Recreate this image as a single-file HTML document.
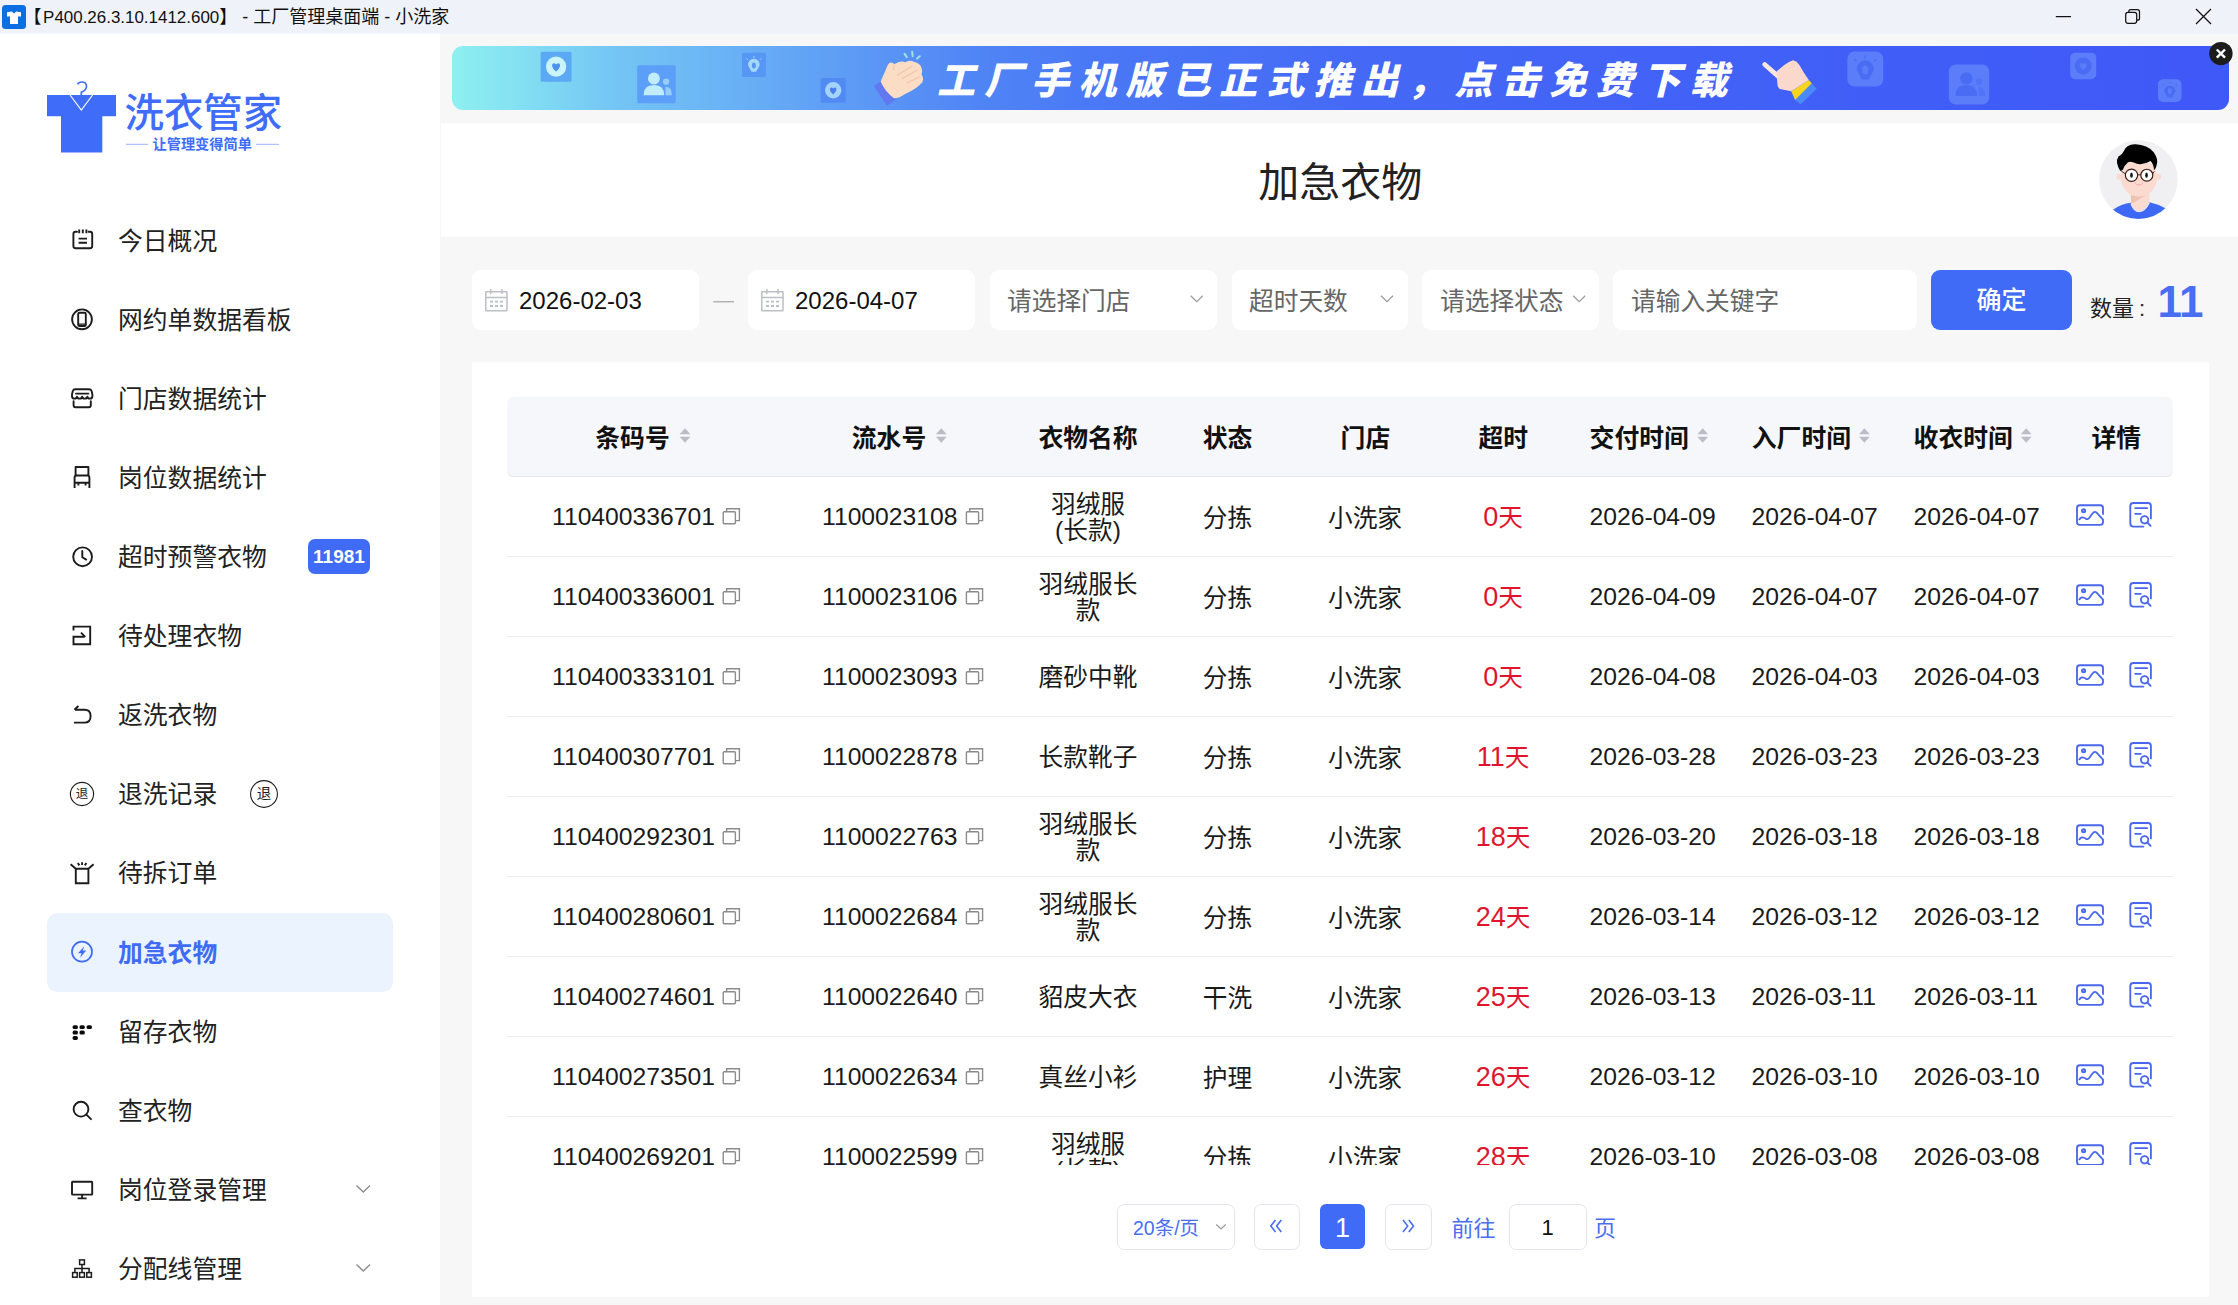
<!DOCTYPE html>
<html lang="zh-CN">
<head>
<meta charset="utf-8">
<title>工厂管理桌面端 - 小洗家</title>
<style>
*{box-sizing:border-box;margin:0;padding:0}
html,body{width:2238px;height:1305px;overflow:hidden;background:#f7f7f8}
body{font-family:"Liberation Sans","Noto Sans CJK SC",sans-serif;color:#1d1d1f;position:relative}
.abs{position:absolute}
svg{position:absolute;overflow:visible}
#titlebar{left:0;top:0;width:2238px;height:33px;background:#eff3f9}
#titlebar span{position:absolute;top:1px;height:33px;line-height:33px;font-size:18px;color:#111;white-space:nowrap}
#sidebar{left:0;top:33px;width:440px;height:1272px;background:#fff}
.mt{position:absolute;left:118px;height:40px;line-height:40px;font-size:24.8px;color:#222;white-space:nowrap}
#act{left:47px;top:912.6px;width:345.6px;height:79px;border-radius:10.5px;background:#ebf3fe}
.mt.on{color:#3f6bf6;font-weight:700}
.badge{left:308px;top:539px;width:62px;height:35px;border-radius:7px;background:#3f6bf6;color:#fff;font-size:19px;font-weight:700;line-height:35px;text-align:center}
#mainhead{left:441px;top:123px;width:1797px;height:114px;background:#fff}
#title{left:441.7px;top:122.5px;width:1797px;height:114px;line-height:121px;text-align:center;font-size:41px;color:#222}
#banner{left:452px;top:46px;width:1777px;height:63.5px;border-radius:11px;overflow:hidden;background:linear-gradient(90deg,#8ef0f0 0%,#84e2f2 3.4%,#74c6f4 9%,#69b1f5 15.8%,#60a2f5 20.4%,#5993f5 24.9%,#5085f5 29.4%,#4a78f6 36.2%,#4770f6 45.2%,#4569f6 50.6%,#4160f7 75%,#3f58f8 100%)}
#btext{left:937px;top:49px;height:63px;line-height:64px;color:#fff;font-weight:900;font-style:italic;font-size:38px;letter-spacing:9.05px;white-space:nowrap}
.inp{position:absolute;top:270px;height:59.5px;background:#fff;border-radius:9px}
.it{position:absolute;top:270px;height:59px;line-height:63px;font-size:24.7px;color:#111;white-space:nowrap}
.it.ph{color:#666}
#card{left:472px;top:361.5px;width:1737px;height:935.5px;background:#fff}
#thead{left:507px;top:397px;width:1666px;height:79px;background:#f6f7fa;border-radius:6px;box-shadow:0 1px 0 #e6e7ec}
.th{position:absolute;top:397px;height:79px;line-height:83px;font-size:24.8px;font-weight:700;color:#111;white-space:nowrap}
#tbody{left:507px;top:477px;width:1666px;height:688px;overflow:hidden}
.tr{position:absolute;left:0;width:1666px;height:80px;border-bottom:1px solid #ebecf0}
.td{position:absolute;top:0;height:79px;display:flex;align-items:center;justify-content:center;text-align:center;font-size:24.7px;line-height:26px;color:#1a1a1a;white-space:nowrap}
.td.l{justify-content:flex-start}
.td.w{white-space:normal;padding-top:2px}
.td.red{color:#e0142d}
.td.c{padding-top:4px}
.td.red{padding-top:2.4px}
.td.red b{font-weight:400;font-size:27px;position:relative;top:-0.8px}
.pg{position:absolute;top:1203.5px;height:46px;line-height:46px;white-space:nowrap}
.pb{border:1px solid #e4e6ec;border-radius:7px;background:#fff}
</style>
</head>
<body>
<div id="titlebar" class="abs"><svg style="left:2px;top:5px" width="24" height="24" viewBox="0 0 24 24"><rect width="24" height="24" rx="3.5" fill="#0b6fe3"/><path d="M5 7.2 L9.8 6.5 L12 8.6 L14.2 6.5 L19 7.2 L19 11.4 L16 11.4 L16 19 L8 19 L8 11.4 L5 11.4Z" fill="#fff"/></svg><span style="left:23.5px">【<i style="font-style:normal;font-size:16.95px;margin-left:1.6px">P400.26.3.10.1412.600</i>】 - 工厂管理桌面端 - 小洗家</span><svg style="left:2040px;top:0" width="198" height="33" viewBox="2040 0 198 33" fill="none" stroke="#111" stroke-width="1.25"><path d="M2055.8 16.6H2071"/><rect x="2125.7" y="12.3" width="11" height="11" rx="2.2"/><path d="M2128.8 12.3V11.5Q2128.8 9.5 2130.8 9.5H2137.3Q2139.5 9.5 2139.5 11.7V18.2Q2139.5 20.2 2137.5 20.2H2136.7"/><path d="M2196 9L2211 24M2211 9L2196 24"/></svg></div>
<div id="sidebar" class="abs"></div>
<div class="abs" style="left:0;top:33px;width:2238px;height:1px;background:rgba(239,243,249,.55)"></div>
<div id="act" class="abs"></div>
<svg style="left:0;top:33px" width="440" height="160" viewBox="0 33 440 160"><path d="M47 95H116V116.3H102.3V152.5H61V116.3H47Z" fill="#406cfa"/><path d="M70 95L81.3 110L92.6 95" fill="none" stroke="#fff" stroke-width="1.2"/><path d="M81.3 95V92.2Q86.5 90.5 86.5 86.3Q86.5 82 81.8 82Q78.6 82 77.6 84.3" fill="none" stroke="#406cfa" stroke-width="1.7"/><path d="M126 144.3H148M256 144.3H279" stroke="#9fb3f6" stroke-width="1"/></svg><div class="abs" style="left:124.5px;top:87.5px;height:50px;line-height:50px;font-size:39.4px;color:#406cfa;font-weight:500;white-space:nowrap">洗衣管家</div><div class="abs" style="left:152.5px;top:134px;height:20px;line-height:20px;font-size:14.2px;color:#406cfa;font-weight:700;white-space:nowrap">让管理变得简单</div>
<div class="mt" style="top:222px">今日概况</div><div class="mt" style="top:301px">网约单数据看板</div><div class="mt" style="top:380px">门店数据统计</div><div class="mt" style="top:459px">岗位数据统计</div><div class="mt" style="top:538px">超时预警衣物</div><div class="mt" style="top:617px">待处理衣物</div><div class="mt" style="top:696px">返洗衣物</div><div class="mt" style="top:775px">退洗记录</div><div class="mt" style="top:854px">待拆订单</div><div class="mt on" style="top:934px">加急衣物</div><div class="mt" style="top:1013px">留存衣物</div><div class="mt" style="top:1092px">查衣物</div><div class="mt" style="top:1171px">岗位登录管理</div><div class="mt" style="top:1250px">分配线管理</div>
<div class="badge abs">11981</div>
<svg style="left:0;top:0" width="440" height="1305" viewBox="0 0 440 1305"><g stroke="#1c1c1c" stroke-width="1.9" fill="none" stroke-linecap="round" stroke-linejoin="round"><path d="M77 231.8H75.6Q73.4 231.8 73.4 234V246Q73.4 248.2 75.6 248.2H90Q92.2 248.2 92.2 246V234Q92.2 231.8 90 231.8H88.6"/><path d="M79.2 229.4V233.2M82.8 229.4V233.2M86.4 229.4V233.2M78.6 238.6H87M78.6 242.8H87" stroke-linecap="butt"/><circle cx="82" cy="319.3" r="9.9"/><rect x="78.2" y="312.8" width="7.6" height="13.2" rx="1.3"/><path d="M78.2 324.2H85.8" stroke-width="1.2"/><path d="M75.3 389.3H89Q91 389.3 91.6 391L92.4 394.5V396.2Q92.4 398.6 89.9 398.6Q87.6 398.6 87.4 396.6Q87.2 398.6 84.8 398.6Q82.4 398.6 82.2 396.6Q82 398.6 79.6 398.6Q77.2 398.6 77 396.6Q76.8 398.6 74.5 398.6Q72 398.6 72 396.2V394.5L72.8 391Q73.4 389.3 75.3 389.3Z"/><path d="M76 393.6H88.4M73.6 401.2V405.2Q73.6 407.2 75.6 407.2H88.8Q90.8 407.2 90.8 405.2V401.2"/><path d="M75.6 475.5V467H88.4V475.5M74.6 488V477.5Q74.6 475.5 76.6 475.5H87.4Q89.4 475.5 89.4 477.5V488M74.6 482.8H89.4M78.4 482.8V485.6M85.6 482.8V485.6" stroke-linecap="butt"/><circle cx="82.6" cy="556.8" r="9.4"/><path d="M82.3 551V557.3L86.2 559.6"/><path d="M73.5 630.5V626.6H90.2V644.2H73.5V636.8H84.8M81 632.6L85.2 636.8" stroke-linecap="butt" stroke-linejoin="miter"/><path d="M74 722.6H84.5Q90.6 722.6 90.6 716.2Q90.6 709.8 84.5 709.8H75M78.4 706L74.4 709.8" stroke-linejoin="miter" stroke-linecap="butt"/><path d="M75.8 868.8H88.4V883.2H75.8ZM75.8 868.8L70.6 864.2M88.4 868.8L93.6 864.2M79.4 865.4L77.8 863M82.1 865V862.2M84.8 865.4L86.4 863" stroke-linecap="butt" stroke-linejoin="miter"/><circle cx="81" cy="1109.2" r="7.4"/><path d="M86.4 1114.6L91 1119.2"/><rect x="72" y="1181.8" width="20.2" height="12.8" rx="0.6"/><path d="M82.1 1194.6V1198.4M77.6 1198.4H86.6" stroke-linecap="butt"/><g stroke-width="1.5" stroke-linecap="butt" stroke-linejoin="miter"><rect x="79.6" y="1259.9" width="4.8" height="4.6"/><rect x="72.6" y="1272.6" width="4.6" height="4.6"/><rect x="79.6" y="1272.6" width="4.8" height="4.6"/><rect x="86.8" y="1272.6" width="4.6" height="4.6"/><path d="M82 1264.5V1272.6M74.9 1272.6V1268.4H89.1V1272.6"/></g></g><circle cx="82" cy="794" r="11.6" fill="none" stroke="#1c1c1c" stroke-width="1.1"/><circle cx="264" cy="794" r="13.4" fill="none" stroke="#1c1c1c" stroke-width="1.1"/><circle cx="82" cy="951.7" r="10" fill="none" stroke="#3f6bf6" stroke-width="1.7"/><path d="M84.3 946.2L78 953.2H81.5L80 957.8L86.2 950.5H82.7Z" fill="#3f6bf6"/><rect x="72.6" y="1025.2" width="5.3" height="3.9" rx="1.6" fill="#0a0a0a"/><rect x="79.5" y="1025.2" width="5.3" height="3.9" rx="1.6" fill="#0a0a0a"/><rect x="86.6" y="1025.2" width="5.3" height="3.9" rx="1.6" fill="#0a0a0a"/><rect x="72.6" y="1030.6" width="5.3" height="3.9" rx="1.6" fill="#0a0a0a"/><rect x="79.5" y="1030.6" width="5.3" height="3.9" rx="1.6" fill="#0a0a0a"/><rect x="72.6" y="1036.0" width="5.3" height="3.9" rx="1.6" fill="#0a0a0a"/><path d="M356.5 1185.5L363.3 1192L370 1185.5M356.5 1264.5L363.3 1271L370 1264.5" fill="none" stroke="#8a8a8a" stroke-width="1.3"/></svg>
<div class="abs" style="left:72px;top:784px;width:20px;height:20px;line-height:20px;text-align:center;font-size:12.5px;color:#1c1c1c">退</div><div class="abs" style="left:253px;top:783px;width:22px;height:22px;line-height:22px;text-align:center;font-size:14.5px;color:#1c1c1c">退</div>
<div id="banner" class="abs"></div>
<svg style="left:0;top:40px" width="2238" height="80" viewBox="0 40 2238 80"><rect x="540.7" y="51.7" width="30.8" height="30.0" rx="1.5" fill="#5ba9f5"/><circle cx="556.1" cy="66.7" r="10.1" fill="#c9f4fb"/><path d="M556.1 71.6C549.2 66.2 552.7 61.0 556.1 64.5C559.5 61.0 563.0 66.2 556.1 71.6Z" fill="#4d92ea"/><rect x="637.2" y="65.3" width="38.6" height="37.9" rx="2.0" fill="#5c9ff8"/><circle cx="653.9" cy="78.5" r="5.9" fill="#c0ecfb"/><path d="M643.6 95.2q0 -10.3 10.3 -10.3q10.3 0 10.3 10.3z" fill="#c0ecfb"/><circle cx="666.1" cy="81.7" r="3.1" fill="#c0ecfb" opacity=".6"/><path d="M665.5 86.8q6.4 0.0 6.4 8.4h-6.4z" fill="#c0ecfb" opacity=".6"/><rect x="742.0" y="52.8" width="23.8" height="24.1" rx="1.5" fill="#5696f4"/><path d="M748.1 65.4a5.8 5.8 0 1 1 11.5 0l-3.5 6.3h-4.6z" fill="#a6d8fa"/><ellipse cx="753.9" cy="65.5" rx="2.0" ry="3.0" fill="#5696f4"/><path d="M753.9 57.7v-1.8M747.9 59.8l-1.4 -1.4M759.9 59.8l1.4 -1.4" stroke="#a6d8fa" stroke-width="1.0" fill="none"/><rect x="820.6" y="78.0" width="25.1" height="24.7" rx="1.5" fill="#528af3"/><circle cx="833.2" cy="90.3" r="8.2" fill="#a3d2fa"/><path d="M833.2 94.4C827.5 89.9 830.3 85.7 833.2 88.5C836.0 85.7 838.8 89.9 833.2 94.4Z" fill="#4a7eea"/><rect x="1847.4" y="51.6" width="35.8" height="34.9" rx="7.0" fill="#5c7df9"/><path d="M1856.6 69.9a8.7 8.7 0 1 1 17.3 0l-5.2 9.5h-6.9z" fill="#4a6cf5"/><ellipse cx="1865.3" cy="70.1" rx="2.9" ry="4.5" fill="#5c7df9"/><path d="M1865.3 58.3v-2.8M1856.3 61.4l-2.1 -2.1M1874.3 61.4l2.1 -2.1" stroke="#4a6cf5" stroke-width="1.6" fill="none"/><rect x="1948.8" y="64.4" width="40.4" height="40.1" rx="7.0" fill="#5c7df9"/><circle cx="1966.3" cy="78.4" r="6.2" fill="#4a6cf5"/><path d="M1955.5 95.9q0 -10.8 10.8 -10.8q10.8 0 10.8 10.8z" fill="#4a6cf5"/><circle cx="1979.1" cy="81.8" r="3.2" fill="#4a6cf5" opacity=".6"/><path d="M1978.4 87.1q6.7 0.0 6.7 8.8h-6.7z" fill="#4a6cf5" opacity=".6"/><rect x="2070.2" y="52.8" width="26.0" height="26.5" rx="5.0" fill="#5c7df9"/><circle cx="2083.2" cy="66.0" r="8.5" fill="#4a6cf5"/><path d="M2083.2 70.2C2077.4 65.6 2080.3 61.3 2083.2 64.2C2086.1 61.3 2089.0 65.6 2083.2 70.2Z" fill="#5c7df9"/><rect x="2158.0" y="79.3" width="23.5" height="22.7" rx="5.0" fill="#5c7df9"/><path d="M2164.1 91.2a5.7 5.7 0 1 1 11.4 0l-3.4 6.2h-4.5z" fill="#4a6cf5"/><ellipse cx="2169.8" cy="91.3" rx="1.9" ry="3.0" fill="#5c7df9"/><path d="M2169.8 83.6v-1.8M2163.8 85.7l-1.4 -1.4M2175.7 85.7l1.4 -1.4" stroke="#4a6cf5" stroke-width="1.0" fill="none"/><g transform="translate(865,44) scale(0.05211)"><path d="M170 800L330 700L600 1060L420 1190Z" fill="#6272f0" fill-opacity=".8"/><path d="M300 720L440 400Q490 320 560 385L590 375Q690 310 770 350Q850 295 940 340Q1060 375 1080 445Q1115 520 1085 585Q1135 660 1100 735Q1000 860 770 960Q650 1045 555 1040Q380 910 300 720Z" fill="#fbdcc4"/><path d="M560 400L545 500M620 600L900 425M715 665L1000 505M810 745L1050 625" stroke="#f3c9ae" stroke-width="24" fill="none" stroke-linecap="round"/><path d="M800 250L760 190M915 235L905 150M1000 280L1050 235" stroke="#a5dfe0" stroke-width="40" stroke-linecap="round"/></g><g transform="translate(1750,48) scale(0.04904)"><path d="M920 1060L1260 720L1360 830L1030 1150Z" fill="#4a8af8"/><path d="M840 880L1200 650L1260 720L920 1060Z" fill="#f7d41e"/><path d="M300 335L600 600" stroke="#fbe7e2" stroke-width="95" stroke-linecap="round"/><path d="M540 480L700 345Q800 270 880 250Q960 270 1000 335L1110 520L1200 650L840 880L610 835Q555 800 560 740Z" fill="#fbd8cc"/></g></svg>
<div id="btext" class="abs">工厂手机版已正式推出，点击免费下载</div>
<svg style="left:2205px;top:38px" width="32" height="32" viewBox="2205 38 32 32"><circle cx="2220.9" cy="53.6" r="11.7" fill="#1c1c1c"/><path d="M2216.8 49.5L2225 57.7M2225 49.5L2216.8 57.7" stroke="#fff" stroke-width="2.4"/></svg>
<div id="mainhead" class="abs"></div><div id="title" class="abs">加急衣物</div>
<svg style="left:2080px;top:130px" width="120" height="100" viewBox="0 0 1566 1305"><defs><clipPath id="avc"><circle cx="762" cy="647" r="513"/></clipPath></defs><circle cx="762" cy="647" r="513" fill="#f0f0f2"/><g clip-path="url(#avc)"><path d="M430 1040Q540 960 665 948L905 942Q1020 965 1120 1025L1120 1250L430 1250Z" fill="#3d68f5"/><path d="M665 780V965Q700 1065 775 1065Q850 1060 905 950V780Z" fill="#fbdad0"/><path d="M665 830V965L860 850Z" fill="#ecc2b1"/><path d="M665 960Q700 1065 775 1065Q850 1060 905 950" fill="none" stroke="#e6e2fb" stroke-width="16"/><circle cx="512" cy="610" r="38" fill="#fbdad0"/><circle cx="1022" cy="610" r="38" fill="#fbdad0"/><ellipse cx="770" cy="625" rx="235" ry="245" fill="#fbdad0"/><path d="M525 535Q455 420 500 350Q560 310 575 270Q610 180 725 185Q880 190 962 290Q1030 390 1000 460Q990 505 968 525Q962 450 920 405Q800 475 700 425Q650 405 625 425Q580 460 560 520Z" fill="#000"/><circle cx="672" cy="590" r="80" fill="#fff" stroke="#3a1c14" stroke-width="15"/><circle cx="872" cy="590" r="78" fill="#fff" stroke="#3a1c14" stroke-width="15"/><ellipse cx="672" cy="590" rx="17" ry="34" fill="#111"/><ellipse cx="868" cy="590" rx="17" ry="34" fill="#111"/><path d="M752 585H794M594 575L535 532M950 570L968 540" stroke="#3a1c14" stroke-width="12"/><path d="M722 700Q775 745 822 690" fill="none" stroke="#f0a3a3" stroke-width="12" stroke-linecap="round"/></g></svg>
<div class="inp" style="left:472px;width:227px"></div><div class="inp" style="left:748px;width:227px"></div><div class="inp" style="left:990px;width:227px"></div><div class="inp" style="left:1232px;width:176px"></div><div class="inp" style="left:1422px;width:177px"></div><div class="inp" style="left:1613px;width:304px"></div>
<div class="it" style="left:519px;font-size:24px;line-height:62px">2026-02-03</div><div class="it" style="left:795px;font-size:24px;line-height:62px">2026-04-07</div><div class="it ph" style="left:1007px">请选择门店</div><div class="it ph" style="left:1249px">超时天数</div><div class="it ph" style="left:1440px">请选择状态</div><div class="it ph" style="left:1631px">请输入关键字</div>
<div class="abs" style="left:1931px;top:270px;width:141px;height:59.5px;border-radius:9px;background:#3f6bf6;color:#fff;text-align:center;line-height:60px;font-size:25px;font-weight:500">确定</div><div class="abs" style="left:2090px;top:291px;height:34px;line-height:35px;font-size:22px;color:#222;white-space:nowrap">数量<span style="margin-left:5px">:</span></div><div class="abs" style="left:2157.5px;top:276.5px;height:50px;line-height:50px;font-size:44px;letter-spacing:-0.6px;font-weight:700;color:#4a6ef2;white-space:nowrap">11</div>
<svg style="left:470px;top:265px" width="1500" height="70" viewBox="470 265 1500 70"><g transform="translate(485.0,289)" fill="none" stroke="#bdbfc4" stroke-width="1.5"><rect x="0.8" y="2.8" width="21.2" height="19" rx="0.5"/><path d="M0.8 8.4H22M5.8 0V5M17 0V5"/><path d="M5 12.6H8M10 12.6H13M15 12.6H18M5 17H8M10 17H13M15 17H18" stroke-width="1.8"/></g><g transform="translate(761.0,289)" fill="none" stroke="#bdbfc4" stroke-width="1.5"><rect x="0.8" y="2.8" width="21.2" height="19" rx="0.5"/><path d="M0.8 8.4H22M5.8 0V5M17 0V5"/><path d="M5 12.6H8M10 12.6H13M15 12.6H18M5 17H8M10 17H13M15 17H18" stroke-width="1.8"/></g><path d="M713.3 301.8H734" stroke="#9a9a9a" stroke-width="1.1"/><path d="M1190.7 295.8L1196.7 301.6L1202.7 295.8" fill="none" stroke="#999" stroke-width="1.2"/><path d="M1381.0 295.8L1387.0 301.6L1393.0 295.8" fill="none" stroke="#999" stroke-width="1.2"/><path d="M1573.2 295.8L1579.2 301.6L1585.2 295.8" fill="none" stroke="#999" stroke-width="1.2"/></svg>
<div id="card" class="abs"></div><div id="thead" class="abs"></div>
<div class="th" style="left:595.3px">条码号</div><div class="th" style="left:851.8px">流水号</div><div class="th" style="left:1038.4px">衣物名称</div><div class="th" style="left:1202.8px">状态</div><div class="th" style="left:1340.6px">门店</div><div class="th" style="left:1478.4px">超时</div><div class="th" style="left:1589.6px">交付时间</div><div class="th" style="left:1751.8px">入厂时间</div><div class="th" style="left:1913.6px">收衣时间</div><div class="th" style="left:2091.4px">详情</div>
<svg style="left:507px;top:397px" width="1666" height="80" viewBox="507 397 1666 80" fill="#babcc8"><path d="M679.6 434.3L685.0 428.2L690.4 434.3Z M679.6 436.8L685.0 442.8L690.4 436.8Z"/><path d="M935.9 434.3L941.3 428.2L946.7 434.3Z M935.9 436.8L941.3 442.8L946.7 436.8Z"/><path d="M1697.3 434.3L1702.7 428.2L1708.1 434.3Z M1697.3 436.8L1702.7 442.8L1708.1 436.8Z"/><path d="M1859.0 434.3L1864.4 428.2L1869.8 434.3Z M1859.0 436.8L1864.4 442.8L1869.8 436.8Z"/><path d="M2020.8 434.3L2026.2 428.2L2031.6 434.3Z M2020.8 436.8L2026.2 442.8L2031.6 436.8Z"/></svg>
<div id="tbody" class="abs">
<div class="tr" style="top:0px"><div class="td l" style="left:45.0px">110400336701</div><div class="td l" style="left:315.0px">1100023108</div><div class="td w" style="left:512px;width:138px">羽绒服<br>(长款)</div><div class="td c" style="left:651px;width:139px">分拣</div><div class="td c" style="left:789px;width:138px">小洗家</div><div class="td red" style="left:927px;width:138px"><b>0</b>天</div><div class="td l" style="left:1082.5px">2026-04-09</div><div class="td l" style="left:1244.5px">2026-04-07</div><div class="td l" style="left:1406.5px">2026-04-07</div></div>
<div class="tr" style="top:80px"><div class="td l" style="left:45.0px">110400336001</div><div class="td l" style="left:315.0px">1100023106</div><div class="td w" style="left:512px;width:138px">羽绒服长<br>款</div><div class="td c" style="left:651px;width:139px">分拣</div><div class="td c" style="left:789px;width:138px">小洗家</div><div class="td red" style="left:927px;width:138px"><b>0</b>天</div><div class="td l" style="left:1082.5px">2026-04-09</div><div class="td l" style="left:1244.5px">2026-04-07</div><div class="td l" style="left:1406.5px">2026-04-07</div></div>
<div class="tr" style="top:160px"><div class="td l" style="left:45.0px">110400333101</div><div class="td l" style="left:315.0px">1100023093</div><div class="td w" style="left:512px;width:138px">磨砂中靴</div><div class="td c" style="left:651px;width:139px">分拣</div><div class="td c" style="left:789px;width:138px">小洗家</div><div class="td red" style="left:927px;width:138px"><b>0</b>天</div><div class="td l" style="left:1082.5px">2026-04-08</div><div class="td l" style="left:1244.5px">2026-04-03</div><div class="td l" style="left:1406.5px">2026-04-03</div></div>
<div class="tr" style="top:240px"><div class="td l" style="left:45.0px">110400307701</div><div class="td l" style="left:315.0px">1100022878</div><div class="td w" style="left:512px;width:138px">长款靴子</div><div class="td c" style="left:651px;width:139px">分拣</div><div class="td c" style="left:789px;width:138px">小洗家</div><div class="td red" style="left:927px;width:138px"><b>11</b>天</div><div class="td l" style="left:1082.5px">2026-03-28</div><div class="td l" style="left:1244.5px">2026-03-23</div><div class="td l" style="left:1406.5px">2026-03-23</div></div>
<div class="tr" style="top:320px"><div class="td l" style="left:45.0px">110400292301</div><div class="td l" style="left:315.0px">1100022763</div><div class="td w" style="left:512px;width:138px">羽绒服长<br>款</div><div class="td c" style="left:651px;width:139px">分拣</div><div class="td c" style="left:789px;width:138px">小洗家</div><div class="td red" style="left:927px;width:138px"><b>18</b>天</div><div class="td l" style="left:1082.5px">2026-03-20</div><div class="td l" style="left:1244.5px">2026-03-18</div><div class="td l" style="left:1406.5px">2026-03-18</div></div>
<div class="tr" style="top:400px"><div class="td l" style="left:45.0px">110400280601</div><div class="td l" style="left:315.0px">1100022684</div><div class="td w" style="left:512px;width:138px">羽绒服长<br>款</div><div class="td c" style="left:651px;width:139px">分拣</div><div class="td c" style="left:789px;width:138px">小洗家</div><div class="td red" style="left:927px;width:138px"><b>24</b>天</div><div class="td l" style="left:1082.5px">2026-03-14</div><div class="td l" style="left:1244.5px">2026-03-12</div><div class="td l" style="left:1406.5px">2026-03-12</div></div>
<div class="tr" style="top:480px"><div class="td l" style="left:45.0px">110400274601</div><div class="td l" style="left:315.0px">1100022640</div><div class="td w" style="left:512px;width:138px">貂皮大衣</div><div class="td c" style="left:651px;width:139px">干洗</div><div class="td c" style="left:789px;width:138px">小洗家</div><div class="td red" style="left:927px;width:138px"><b>25</b>天</div><div class="td l" style="left:1082.5px">2026-03-13</div><div class="td l" style="left:1244.5px">2026-03-11</div><div class="td l" style="left:1406.5px">2026-03-11</div></div>
<div class="tr" style="top:560px"><div class="td l" style="left:45.0px">110400273501</div><div class="td l" style="left:315.0px">1100022634</div><div class="td w" style="left:512px;width:138px">真丝小衫</div><div class="td c" style="left:651px;width:139px">护理</div><div class="td c" style="left:789px;width:138px">小洗家</div><div class="td red" style="left:927px;width:138px"><b>26</b>天</div><div class="td l" style="left:1082.5px">2026-03-12</div><div class="td l" style="left:1244.5px">2026-03-10</div><div class="td l" style="left:1406.5px">2026-03-10</div></div>
<div class="tr" style="top:640px"><div class="td l" style="left:45.0px">110400269201</div><div class="td l" style="left:315.0px">1100022599</div><div class="td w" style="left:512px;width:138px">羽绒服<br>(长款)</div><div class="td c" style="left:651px;width:139px">分拣</div><div class="td c" style="left:789px;width:138px">小洗家</div><div class="td red" style="left:927px;width:138px"><b>28</b>天</div><div class="td l" style="left:1082.5px">2026-03-10</div><div class="td l" style="left:1244.5px">2026-03-08</div><div class="td l" style="left:1406.5px">2026-03-08</div></div>
<svg style="left:0;top:0" width="1666" height="720" viewBox="507 477 1666 720"><defs><g id="rowic" fill="none"><g stroke="#8c8c8c" stroke-width="1.4"><rect x="723.2" y="511.8" width="12.2" height="12" rx="1"/><path d="M726.6 511.8V508.8H739.4V520.6H735.4"/><rect x="966.4" y="511.8" width="12.2" height="12" rx="1"/><path d="M969.8 511.8V508.8H982.6V520.6H978.6"/></g><g stroke="#4a67ee" stroke-width="1.85" stroke-linecap="round" stroke-linejoin="round"><path d="M2103 514V508Q2103 505.2 2100.2 505.2H2079.8Q2077 505.2 2077 508V522Q2077 524.9 2079.8 524.9H2100.2Q2103 524.9 2103 522V519.6L2096.6 512.6Q2095.2 511.2 2093.4 512.6Q2091.6 514.2 2089.6 517.4Q2088 519.8 2086 518.8Q2083.6 517.2 2082 517.4Q2080.4 517.8 2079.4 519.4"/><circle cx="2083.6" cy="510.7" r="1.6" fill="#8fa1f4"/><path d="M2150.9 518.4V506Q2150.9 503 2147.9 503H2133.3Q2130.3 503 2130.3 506V523.6Q2130.3 526.6 2133.3 526.6H2143.4M2135.2 508.1H2147.2M2135.2 513.8H2140.8"/><circle cx="2144.6" cy="519.8" r="3.7"/><path d="M2147.3 522.5L2150.6 525.8"/></g></g></defs><use href="#rowic" y="0"/><use href="#rowic" y="80"/><use href="#rowic" y="160"/><use href="#rowic" y="240"/><use href="#rowic" y="320"/><use href="#rowic" y="400"/><use href="#rowic" y="480"/><use href="#rowic" y="560"/><use href="#rowic" y="640"/></svg>
</div>
<div class="pg pb" style="left:1117px;width:118px"></div><div class="pg" style="left:1133px;font-size:19.5px;color:#4a6ef2;line-height:48px">20条/页</div><div class="pg pb" style="left:1253.5px;width:46.5px"></div><div class="pg" style="left:1320px;width:45px;top:1204px;height:45px;line-height:49px;border-radius:6px;background:#3f6bf6;color:#fff;font-size:27px;text-align:center">1</div><div class="pg pb" style="left:1385px;width:46.5px"></div><div class="pg" style="left:1451.5px;font-size:22px;color:#4a6ef2;line-height:49px">前往</div><div class="pg pb" style="left:1508.5px;width:78px;text-align:center;font-size:22px;color:#111;line-height:46px">1</div><div class="pg" style="left:1594px;font-size:22px;color:#4a6ef2;line-height:49px">页</div><svg style="left:1100px;top:1190px" width="400" height="70" viewBox="1100 1190 400 70" fill="none" stroke="#4a6ef2" stroke-width="1.6"><path d="M1216.3 1224.5L1221 1229L1225.7 1224.5" stroke="#9a9a9a" stroke-width="1.2"/><path d="M1275.5 1220L1270.8 1226L1275.5 1232M1281.3 1220L1276.6 1226L1281.3 1232"/><path d="M1403 1220L1407.7 1226L1403 1232M1408.8 1220L1413.5 1226L1408.8 1232"/></svg>
</body>
</html>
